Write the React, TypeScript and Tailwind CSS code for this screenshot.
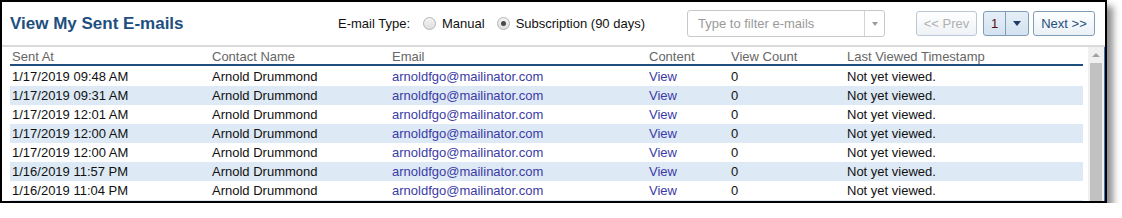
import React from 'react'

const rows = [
  '1/17/2019 09:48 AM',
  '1/17/2019 09:31 AM',
  '1/17/2019 12:01 AM',
  '1/17/2019 12:00 AM',
  '1/17/2019 12:00 AM',
  '1/16/2019 11:57 PM',
  '1/16/2019 11:04 PM',
]

const cols = 'grid grid-cols-[200px_180px_257px_82px_116px_1fr] pl-[2px]'

function Radio({ checked }: { checked?: boolean }) {
  return (
    <span className="flex h-[13px] w-[13px] items-center justify-center rounded-full border border-[#b4b4b4] bg-gradient-to-b from-[#f4f4f4] to-[#dedede]">
      {checked && <span className="h-[5px] w-[5px] rounded-full bg-[#4a4a4a]" />}
    </span>
  )
}

export default function App() {
  return (
    <div className="bg-white font-['Liberation_Sans',Arial,sans-serif] text-[13px] text-[#111]">
      <div className="flex h-[203px] w-[1107px] flex-col overflow-hidden border-2 border-black bg-white shadow-[6px_6px_7px_rgba(0,0,0,0.45)]">
        {/* Toolbar */}
        <div className="flex h-[45px] shrink-0 items-center border-b-2 border-[#dadada] pl-2">
          <h1 className="w-[328px] text-[17px] font-bold text-[#1d4f80]">View My Sent E-mails</h1>
          <span>E-mail Type:</span>
          <label className="ml-[13px] flex items-center gap-[6px]">
            <Radio />
            <span>Manual</span>
          </label>
          <label className="ml-[12px] flex items-center gap-[6px]">
            <Radio checked />
            <span>Subscription (90 days)</span>
          </label>
          <div className="ml-[42px] flex h-[27px] w-[198px] items-center rounded-[3px] border border-[#c8c8c8] bg-white">
            <span className="flex-1 pl-[10px] text-[#9a9a9a]">Type to filter e-mails</span>
            <span className="flex h-full w-[20px] items-center justify-center border-l border-[#d4d4d4]">
              <span className="h-0 w-0 border-x-[3px] border-t-[4px] border-x-transparent border-t-[#9a9a9a]" />
            </span>
          </div>
          <button className="ml-[31px] h-[25px] w-[61px] rounded-[3px] border border-[#b9c8d8] bg-gradient-to-b from-white to-[#eef2f6] text-[#b0b0b0]">
            &lt;&lt; Prev
          </button>
          <div className="ml-[6px] flex h-[25px] w-[46px] overflow-hidden rounded-[3px] border border-[#7f9db9] bg-gradient-to-b from-[#e6eff8] to-[#d3e2f0]">
            <span className="flex w-[22px] items-center justify-center border-r border-[#7f9db9] text-[#5a0c0c]">1</span>
            <span className="flex flex-1 items-center justify-center">
              <span className="h-0 w-0 border-x-[4px] border-t-[5px] border-x-transparent border-t-[#1d3f6a]" />
            </span>
          </div>
          <button className="ml-[4px] h-[25px] w-[62px] rounded-[3px] border border-[#7f9db9] bg-gradient-to-b from-white to-[#eaf0f6] text-[#1d4f80]">
            Next &gt;&gt;
          </button>
        </div>

        {/* Grid + scrollbar */}
        <div className="flex min-h-0 flex-1">
          <div className="ml-2 w-[1073px] overflow-hidden">
            <div className={`${cols} h-[19px] items-center border-b-2 border-[#1d4f80] text-[#666]`}>
              <span>Sent At</span>
              <span>Contact Name</span>
              <span>Email</span>
              <span>Content</span>
              <span>View Count</span>
              <span>Last Viewed Timestamp</span>
            </div>
            <div className="mt-px">
              {rows.map((t, i) => (
                <div key={i} className={`${cols} h-[19px] items-center ${i % 2 === 1 ? 'bg-[#dde9f5]' : 'bg-white'}`}>
                  <span>{t}</span>
                  <span>Arnold Drummond</span>
                  <span className="text-[#3b3ba6]">arnoldfgo@mailinator.com</span>
                  <span className="text-[#3b3ba6]">View</span>
                  <span>0</span>
                  <span>Not yet viewed.</span>
                </div>
              ))}
              <div className="h-[19px] bg-[#dde9f5]" />
            </div>
          </div>
          <div className="ml-[5px] flex w-[16px] flex-col bg-[#f0f0f0]">
            <div className="flex h-[16px] items-center justify-center">
              <span className="h-0 w-0 border-x-[4px] border-b-[4px] border-x-transparent border-b-[#a3a3a3]" />
            </div>
            <div className="mx-[2px] flex-1 bg-[#c1c1c1]" />
          </div>
          <div className="w-px bg-[#2f7bc6]" />
        </div>
      </div>
    </div>
  )
}
